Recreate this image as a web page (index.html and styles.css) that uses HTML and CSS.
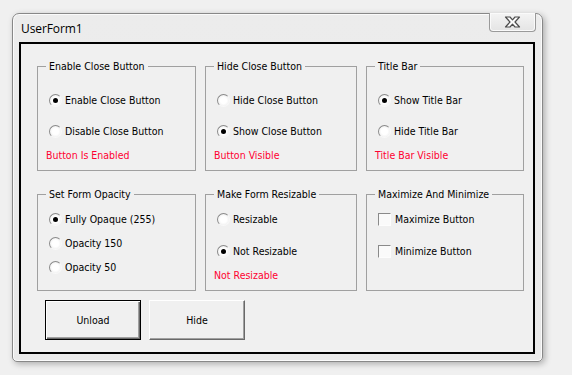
FILE: index.html
```html
<!DOCTYPE html>
<html>
<head>
<meta charset="utf-8">
<link rel="stylesheet" href="styles.css">
</head>
<body>
<div class="window">
  <div class="titlebar">
    <span class="title">UserForm1</span>
    <div class="close">
      <svg width="17" height="12" viewBox="0 0 17 12">
        <path d="M1.5 1 H6 L8.5 3.8 L11 1 H15.5 L11 6 L15.5 11 H11 L8.5 8.2 L6 11 H1.5 L6 6 Z" fill="#fbfbfb" stroke="#4d4d4d" stroke-width="1.2" stroke-linejoin="round"/>
      </svg>
    </div>
  </div>
  <div class="client">
    <div class="grid">
      <fieldset class="frame top">
        <legend>Enable Close Button</legend>
        <div class="opt"><span class="radio on"></span><span>Enable Close Button</span></div>
        <div class="opt gap"><span class="radio"></span><span>Disable Close Button</span></div>
        <div class="status">Button Is Enabled</div>
      </fieldset>
      <fieldset class="frame top">
        <legend>Hide Close Button</legend>
        <div class="opt"><span class="radio"></span><span>Hide Close Button</span></div>
        <div class="opt gap"><span class="radio on"></span><span>Show Close Button</span></div>
        <div class="status">Button Visible</div>
      </fieldset>
      <fieldset class="frame top">
        <legend>Title Bar</legend>
        <div class="opt"><span class="radio on"></span><span>Show Title Bar</span></div>
        <div class="opt gap"><span class="radio"></span><span>Hide Title Bar</span></div>
        <div class="status">Title Bar Visible</div>
      </fieldset>
      <fieldset class="frame bottom">
        <legend>Set Form Opacity</legend>
        <div class="opt"><span class="radio on"></span><span>Fully Opaque (255)</span></div>
        <div class="opt"><span class="radio"></span><span>Opacity 150</span></div>
        <div class="opt"><span class="radio"></span><span>Opacity 50</span></div>
      </fieldset>
      <fieldset class="frame bottom">
        <legend>Make Form Resizable</legend>
        <div class="opt"><span class="radio"></span><span>Resizable</span></div>
        <div class="opt gap2"><span class="radio on"></span><span>Not Resizable</span></div>
        <div class="status">Not Resizable</div>
      </fieldset>
      <fieldset class="frame bottom">
        <legend>Maximize And Minimize</legend>
        <div class="opt"><span class="check"></span><span>Maximize Button</span></div>
        <div class="opt gap2"><span class="check"></span><span>Minimize Button</span></div>
      </fieldset>
    </div>
    <div class="buttons">
      <div class="btn default">Unload</div>
      <div class="btn">Hide</div>
    </div>
  </div>
</div>
</body>
</html>
```
FILE: styles.css
```css
html, body {
  margin: 0;
  padding: 0;
  background: #f0f0f0;
}
body {
  width: 572px;
  height: 375px;
  overflow: hidden;
  font-family: "DejaVu Sans Condensed", "DejaVu Sans", sans-serif;
  font-stretch: condensed;
  font-size: 10.5px;
  color: #000;
}
.window {
  box-sizing: border-box;
  margin: 13px 0 0 12px;
  width: 531px;
  height: 349px;
  border: 1px solid #888888;
  border-radius: 7px 7px 5px 5px;
  background: linear-gradient(#ececec, #e9e9e9);
  box-shadow: inset 0 0 0 1px #fbfbfb, 2px 2px 6px rgba(0,0,0,0.28);
}
.titlebar {
  display: flex;
  justify-content: space-between;
  align-items: flex-start;
  height: 28px;
}
.title {
  font-family: "Open Sans", "Noto Sans", sans-serif;
  font-stretch: normal;
  font-size: 12px;
  padding: 6px 0 0 8px;
  letter-spacing: -0.1px;
}
.close {
  box-sizing: border-box;
  width: 47px;
  height: 19px;
  margin-right: 6px;
  margin-top: -1px;
  border: 1px solid #9a9a9a;
  border-top: none;
  border-radius: 0 0 4px 4px;
  background: linear-gradient(#f4f4f4, #e4e4e4);
  box-shadow: inset 0 0 0 1px #fafafa;
  display: flex;
  align-items: center;
  justify-content: center;
}
.close svg { display: block; }
.client {
  box-sizing: border-box;
  margin-left: 6px;
  width: 516px;
  height: 312px;
  border: 2px solid #000;
  background: #f0f0f0;
  padding: 16px 0 0 16px;
}
.grid {
  display: grid;
  grid-template-columns: 159px 152px 158px;
  grid-template-rows: 111px 103px;
  column-gap: 9px;
  row-gap: 17px;
}
.frame {
  margin: 0;
  padding: 0 0 0 11px;
  border: 1px solid #a0a0a0;
  min-width: 0;
}
.frame legend {
  margin-left: -3px;
  padding: 0 3px;
  line-height: 13px;
}
.frame.top { padding-top: 15px; }
.frame.bottom { padding-top: 6px; }
.opt {
  display: flex;
  align-items: center;
  height: 24px;
}
.opt.gap { margin-top: 7px; }
.opt.gap2 { margin-top: 8px; }
.status {
  height: 24px;
  line-height: 24px;
  margin-left: -3px;
  color: #ff0030;
}
.radio {
  box-sizing: border-box;
  position: relative;
  width: 13px;
  height: 13px;
  border-radius: 50%;
  border: 1px solid;
  border-color: #8a8a8a #f8f8f8 #f8f8f8 #8a8a8a;
  background: radial-gradient(circle at 50% 50%, #ffffff 40%, #e6e6e6 100%);
  margin-right: 3px;
  flex: none;
}
.radio.on::after {
  content: "";
  position: absolute;
  left: 3px;
  top: 3px;
  width: 5px;
  height: 5px;
  border-radius: 50%;
  background: #000;
}
.check {
  box-sizing: border-box;
  width: 13px;
  height: 13px;
  border: 1px solid;
  border-color: #8a8a8a #fdfdfd #fdfdfd #8a8a8a;
  background: #fafafa;
  margin-right: 4px;
  flex: none;
}
.buttons {
  display: flex;
  gap: 8px;
  margin-top: 9px;
  margin-left: 8px;
}
.btn {
  box-sizing: border-box;
  width: 96px;
  height: 40px;
  display: flex;
  align-items: center;
  justify-content: center;
  background: #f0f0f0;
  border: 1px solid;
  border-color: #ffffff #696969 #696969 #ffffff;
  box-shadow: inset -1px -1px 0 #a0a0a0;
}
.btn.default {
  border: 1px solid #000;
  box-shadow: inset 1px 1px 0 #ffffff, inset -1px -1px 0 #696969, inset -2px -2px 0 #a0a0a0;
}
```
